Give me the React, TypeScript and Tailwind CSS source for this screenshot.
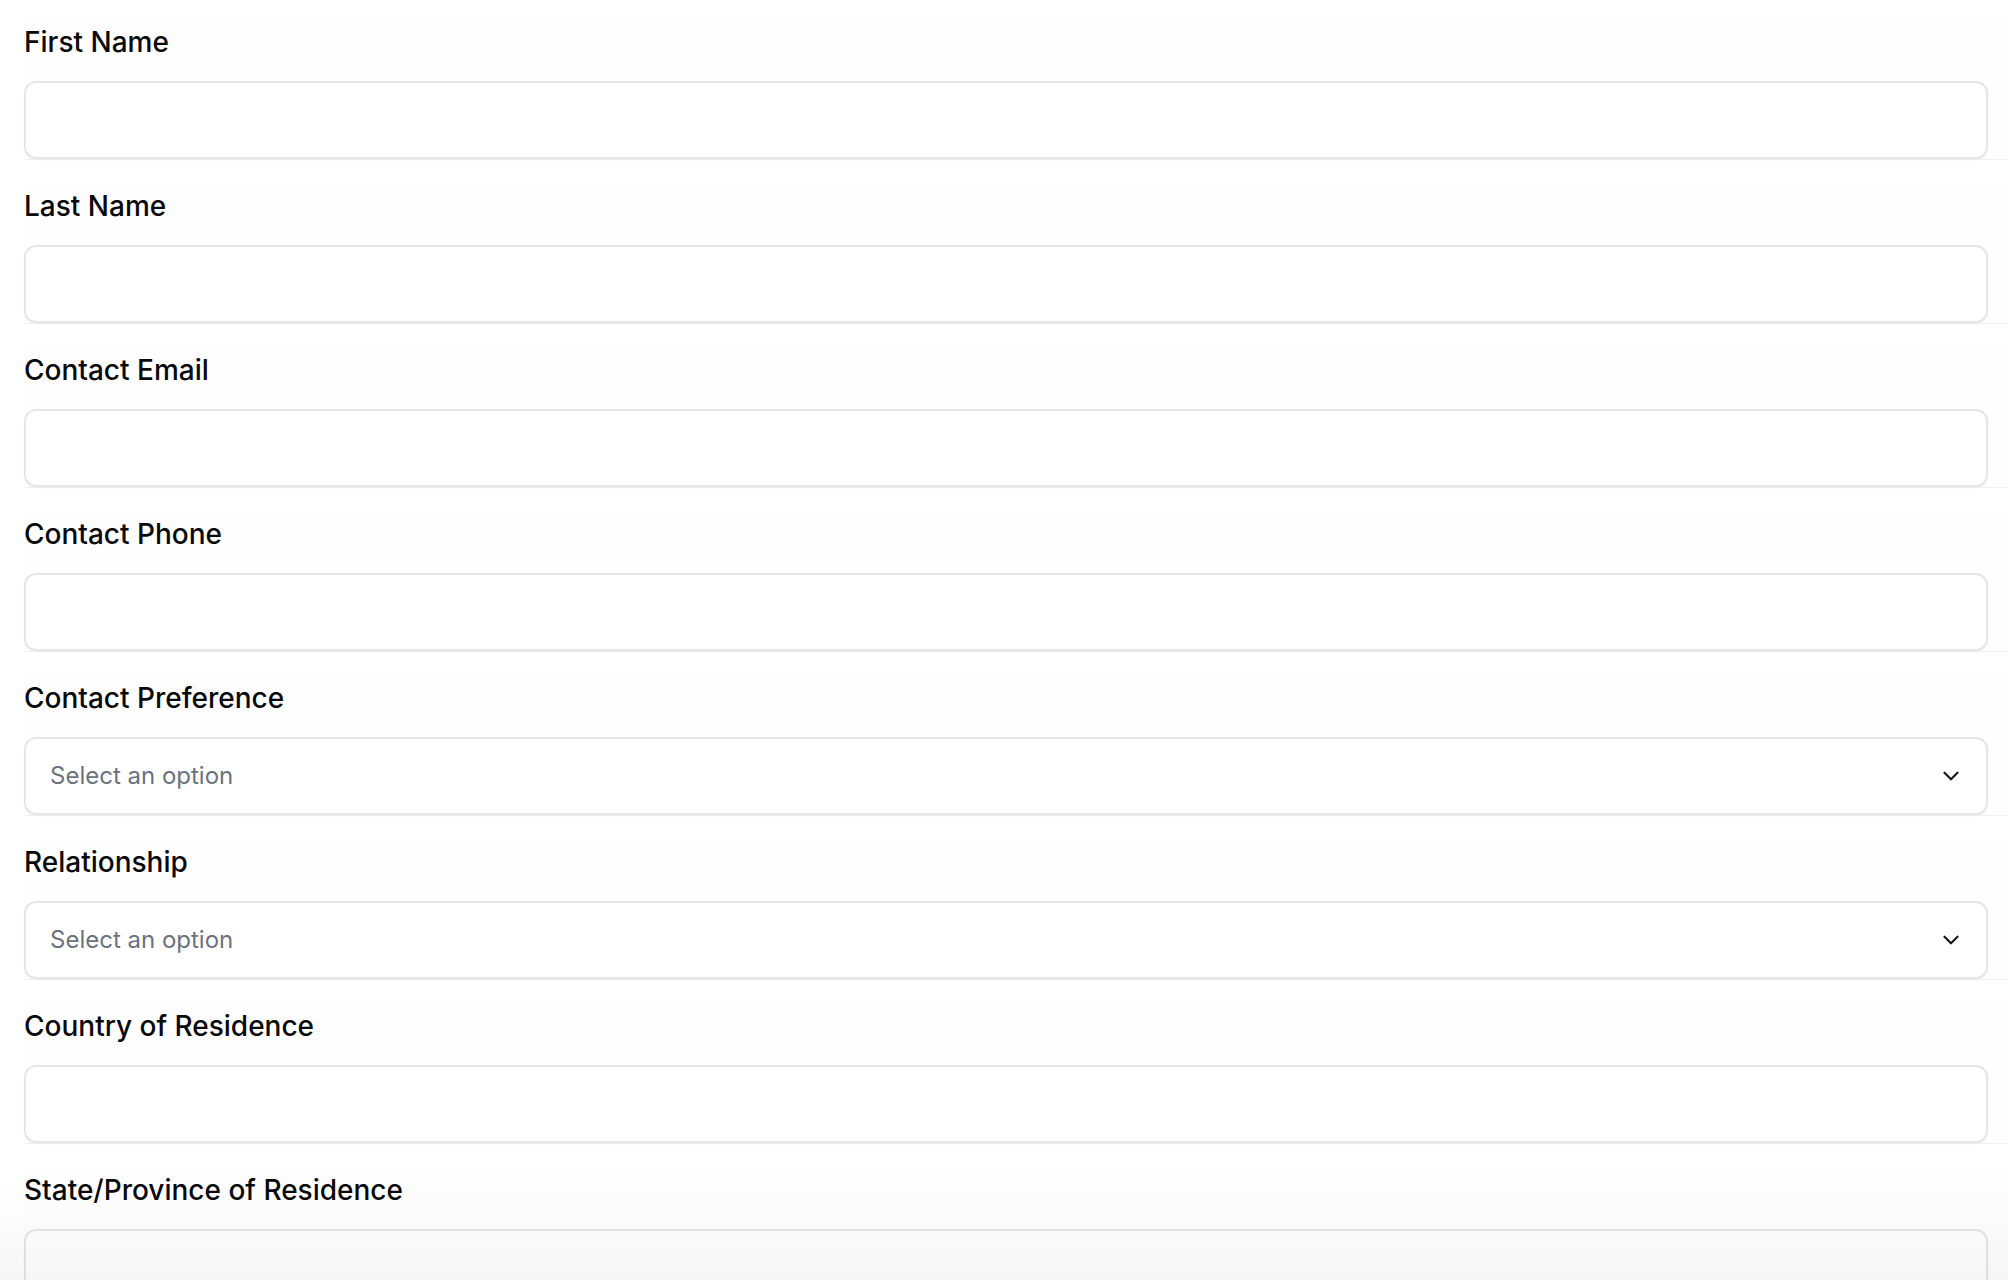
import { FC } from "react";

type Field = {
    label: string;
    select?: boolean;
};

const fields: Field[] = [
    { label: "First Name" },
    { label: "Last Name" },
    { label: "Contact Email" },
    { label: "Contact Phone" },
    { label: "Contact Preference", select: true },
    { label: "Relationship", select: true },
    { label: "Country of Residence" },
    { label: "State/Province of Residence" },
];

const Chevron: FC = () => (
    <svg
        width="26"
        height="26"
        viewBox="0 0 24 24"
        fill="none"
        stroke="#18181b"
        strokeWidth="2"
        strokeLinecap="round"
        strokeLinejoin="round"
    >
        <path d="m6 9 6 6 6-6" />
    </svg>
);

const FormField: FC<{ field: Field }> = ({ field }) => {
    return (
        <div className="flex flex-col -mr-10 bg-[#fefefe] shadow-[0_1px_0_#f2f2f4]">
            <label className="text-[28px] leading-[40px] font-medium text-[#09090b] mb-[19px]">
                {field.label}
            </label>
            {field.select ? (
                <div className="w-[1964px] h-[78px] flex items-center justify-between bg-white border-2 border-[#e6e6ea] rounded-[12px] pl-[24px] pr-[22px] shadow-[0_1px_2px_rgba(0,0,0,0.04)]">
                    <span className="text-[24px] text-[#6b7280]">Select an option</span>
                    <Chevron />
                </div>
            ) : (
                <input
                    type="text"
                    className="w-[1964px] h-[78px] bg-white border-2 border-[#e6e6ea] rounded-[12px] px-[24px] text-[24px] outline-none shadow-[0_1px_2px_rgba(0,0,0,0.04)]"
                />
            )}
        </div>
    );
};

export default function App() {
    return (
        <div className="relative w-full h-[1280px] overflow-hidden bg-white font-['Inter','Liberation_Sans',sans-serif]">
            <div className="flex flex-col gap-[27px] pt-[22px] pl-[24px]">
                {fields.map((f) => (
                    <FormField key={f.label} field={f} />
                ))}
            </div>
            <div className="pointer-events-none absolute inset-x-0 bottom-0 h-[100px] bg-gradient-to-t from-black/[0.035] to-transparent" />
        </div>
    );
}
